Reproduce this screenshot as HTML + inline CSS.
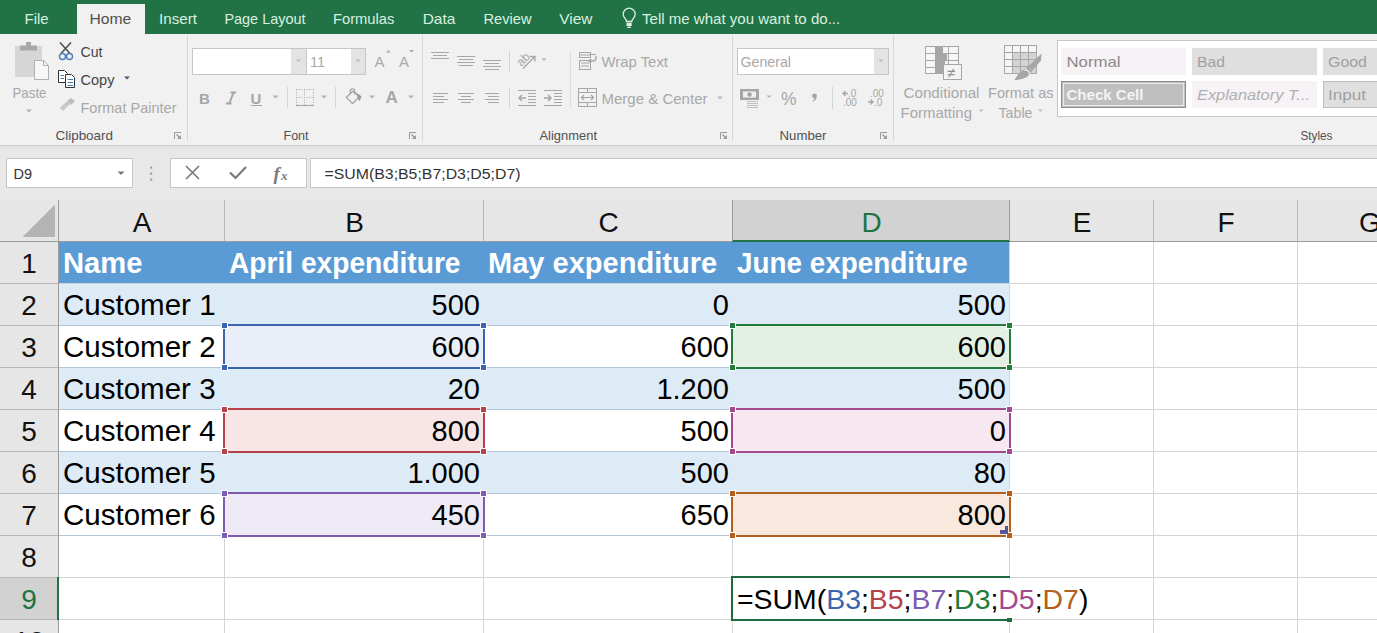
<!DOCTYPE html>
<html><head><meta charset="utf-8">
<style>
*{box-sizing:border-box}
html,body{margin:0;padding:0}
body{width:1377px;height:633px;overflow:hidden;position:relative;background:#fff;font-family:"Liberation Sans",sans-serif}
div,span{position:absolute;white-space:nowrap}
.tab{top:9px;font-size:14.5px;color:#e3f1e8;line-height:18px}
.glabel{top:127px;font-size:13px;color:#555;line-height:16px}
.gsep{top:38px;width:1px;height:103px;background:#dadada}
.rt{font-size:14.5px;color:#444;line-height:18px}
.dis{color:#a8a8a8}
.ch{top:200px;height:41px;font-size:28px;color:#111;text-align:center;line-height:41px}
.rh{left:0;width:58px;height:42px;font-size:28px;color:#111;text-align:center;line-height:42px}
.cell{font-size:27.5px;color:#000;line-height:42px;letter-spacing:0.9px}
.hd{font-weight:bold;color:#fff;letter-spacing:0.2px}
.r{text-align:right}
</style></head><body>
<div style="left:0;top:0;width:1377px;height:34px;background:#217346"></div>
<div style="left:77px;top:4px;width:68px;height:31px;background:#f1f1f1"></div>
<svg style="position:absolute;left:0;top:0" width="1377" height="34" font-family="Liberation Sans"><text x="24.599999999999998" y="24" font-size="15" fill="#d9f0e0" textLength="24.0" lengthAdjust="spacingAndGlyphs">File</text><text x="89.5" y="24" font-size="15" fill="#505050" textLength="41.8" lengthAdjust="spacingAndGlyphs">Home</text><text x="159.0" y="24" font-size="15" fill="#d9f0e0" textLength="37.9" lengthAdjust="spacingAndGlyphs">Insert</text><text x="224.39999999999998" y="24" font-size="15" fill="#d9f0e0" textLength="81.2" lengthAdjust="spacingAndGlyphs">Page Layout</text><text x="333.0" y="24" font-size="15" fill="#d9f0e0" textLength="61.4" lengthAdjust="spacingAndGlyphs">Formulas</text><text x="422.7" y="24" font-size="15" fill="#d9f0e0" textLength="32.7" lengthAdjust="spacingAndGlyphs">Data</text><text x="483.4" y="24" font-size="15" fill="#d9f0e0" textLength="48.1" lengthAdjust="spacingAndGlyphs">Review</text><text x="559.2" y="24" font-size="15" fill="#d9f0e0" textLength="33.2" lengthAdjust="spacingAndGlyphs">View</text><text x="642.0" y="24" font-size="15" fill="#d9f0e0" textLength="198.20000000000002" lengthAdjust="spacingAndGlyphs">Tell me what you want to do...</text><path d="M626.6 21.5c0-2.2-3.4-3.8-3.4-7.3a6 6 0 0 1 12 0c0 3.5-3.4 5.1-3.4 7.3z" fill="none" stroke="#d9f0e0" stroke-width="1.3"/><rect x="626.5" y="22.8" width="5.2" height="3.2" fill="#d9f0e0"/><rect x="627.3" y="26.6" width="3.6" height="1.4" fill="#d9f0e0"/></svg>
<div style="left:0;top:34px;width:1377px;height:111px;background:#f1f1f1"></div>
<div style="left:0;top:145px;width:1377px;height:55px;background:#e8e8e8"></div>
<div style="left:0;top:145px;width:1377px;height:1px;background:#d2d2d2"></div>
<div style="left:0;top:146px;width:1377px;height:3px;background:#e2e2e2"></div>
<svg style="position:absolute;left:0;top:0" width="1377" height="200" font-family="Liberation Sans"><line x1="187.5" y1="35" x2="187.5" y2="141" stroke="#d6d6d6" stroke-width="1"/><line x1="422.5" y1="35" x2="422.5" y2="141" stroke="#d6d6d6" stroke-width="1"/><line x1="732.5" y1="35" x2="732.5" y2="141" stroke="#d6d6d6" stroke-width="1"/><line x1="893.5" y1="35" x2="893.5" y2="141" stroke="#d6d6d6" stroke-width="1"/><text x="55.5" y="140" font-size="13" fill="#505050" textLength="57.5" lengthAdjust="spacingAndGlyphs">Clipboard</text><text x="283.5" y="140" font-size="13" fill="#505050" textLength="25" lengthAdjust="spacingAndGlyphs">Font</text><text x="539.5" y="140" font-size="13" fill="#505050" textLength="57.5" lengthAdjust="spacingAndGlyphs">Alignment</text><text x="779.5" y="140" font-size="13" fill="#505050" textLength="47" lengthAdjust="spacingAndGlyphs">Number</text><text x="1300.5" y="140" font-size="13" fill="#505050" textLength="32" lengthAdjust="spacingAndGlyphs">Styles</text><path d="M174.5 139v-6.5h6.5" fill="none" stroke="#9a9a9a" stroke-width="1"/><path d="M176.5 134.5l4 4" fill="none" stroke="#9a9a9a" stroke-width="1.2"/><path d="M181 135v4h-4z" fill="#9a9a9a" stroke="none" stroke-width="1"/><path d="M409.5 139v-6.5h6.5" fill="none" stroke="#9a9a9a" stroke-width="1"/><path d="M411.5 134.5l4 4" fill="none" stroke="#9a9a9a" stroke-width="1.2"/><path d="M416 135v4h-4z" fill="#9a9a9a" stroke="none" stroke-width="1"/><path d="M720.5 139v-6.5h6.5" fill="none" stroke="#9a9a9a" stroke-width="1"/><path d="M722.5 134.5l4 4" fill="none" stroke="#9a9a9a" stroke-width="1.2"/><path d="M727 135v4h-4z" fill="#9a9a9a" stroke="none" stroke-width="1"/><path d="M880.5 139v-6.5h6.5" fill="none" stroke="#9a9a9a" stroke-width="1"/><path d="M882.5 134.5l4 4" fill="none" stroke="#9a9a9a" stroke-width="1.2"/><path d="M887 135v4h-4z" fill="#9a9a9a" stroke="none" stroke-width="1"/><rect x="15" y="46" width="27" height="31" fill="#d6d6d6" stroke="none" stroke-width="1"/><rect x="20" y="45.5" width="17" height="5" fill="#a8a8a8" stroke="none" stroke-width="1"/><rect x="26" y="42" width="5" height="4" fill="#a8a8a8" stroke="none" stroke-width="1"/><path d="M34.5 60.5h9l5 5v14h-14z" fill="#f7f7f7" stroke="#b0b0b0" stroke-width="1"/><path d="M43.5 60.5v5h5" fill="none" stroke="#b0b0b0" stroke-width="1"/><text x="12.5" y="98" font-size="14.5" fill="#a8a8a8" textLength="34" lengthAdjust="spacingAndGlyphs">Paste</text><path d="M26.0 109.5h6l-3.0 3.0z" fill="#b0b0b0" stroke="none" stroke-width="1"/><path d="M60 42.5l10 11M71 42.5l-10 11" fill="none" stroke="#505050" stroke-width="1.6"/><circle cx="62.5" cy="56.5" r="3" fill="none" stroke="#4a7ebb" stroke-width="1.4"/><circle cx="69.5" cy="56.5" r="3" fill="none" stroke="#4a7ebb" stroke-width="1.4"/><text x="80.5" y="57" font-size="14.5" fill="#444" textLength="22" lengthAdjust="spacingAndGlyphs">Cut</text><path d="M58.5 70.5h6l3 3v9h-9z" fill="#fff" stroke="#333" stroke-width="1"/><path d="M65.5 74.5h6l3 3v10h-9z" fill="#fff" stroke="#333" stroke-width="1"/><line x1="60.5" y1="75.5" x2="64" y2="75.5" stroke="#4a7ebb" stroke-width="1"/><line x1="60.5" y1="78.5" x2="64" y2="78.5" stroke="#4a7ebb" stroke-width="1"/><line x1="67.5" y1="79.5" x2="73" y2="79.5" stroke="#4a7ebb" stroke-width="1"/><line x1="67.5" y1="82.5" x2="73" y2="82.5" stroke="#4a7ebb" stroke-width="1"/><line x1="67.5" y1="85.5" x2="73" y2="85.5" stroke="#4a7ebb" stroke-width="1"/><text x="80.5" y="85" font-size="14.5" fill="#444" textLength="34" lengthAdjust="spacingAndGlyphs">Copy</text><path d="M124.0 76.5h6l-3.0 3.0z" fill="#555" stroke="none" stroke-width="1"/><path d="M60 108l7-7 3 3-7 7z" fill="#c8c8c8" stroke="none" stroke-width="1"/><path d="M67 101l4-3 4 3-4 4z" fill="#bdbdbd" stroke="none" stroke-width="1"/><text x="80.5" y="112.5" font-size="14.5" fill="#a8a8a8" textLength="96" lengthAdjust="spacingAndGlyphs">Format Painter</text><rect x="192.5" y="48.5" width="114" height="26" fill="#fff" stroke="#c6c6c6" stroke-width="1"/><rect x="291" y="49" width="15" height="25" fill="#e3e3e3" stroke="none" stroke-width="1"/><rect x="306.5" y="48.5" width="59" height="26" fill="#fff" stroke="#c6c6c6" stroke-width="1"/><rect x="351" y="49" width="14" height="25" fill="#e3e3e3" stroke="none" stroke-width="1"/><path d="M296.0 59.5h5l-2.5 2.5z" fill="#b8b8b8" stroke="none" stroke-width="1"/><path d="M355.5 59.5h5l-2.5 2.5z" fill="#b8b8b8" stroke="none" stroke-width="1"/><text x="310" y="67" font-size="14.5" fill="#a8a8a8">11</text><text x="374.5" y="67" font-size="15" fill="#a8a8a8">A</text><path d="M386 52.5l2.5-2.5 2.5 2.5" fill="#a8a8a8" stroke="none" stroke-width="1"/><text x="399" y="67" font-size="15" fill="#a8a8a8">A</text><path d="M409 50h5l-2.5 2.5z" fill="#a8a8a8" stroke="none" stroke-width="1"/><text x="199" y="103.5" font-size="15" fill="#a6a6a6" font-weight="bold">B</text><path d="M230.5 92.5h5.5M226 103.5h5.5M233.5 92.5l-4.2 11" fill="none" stroke="#a6a6a6" stroke-width="2"/><text x="250.5" y="103.5" font-size="15" fill="#a6a6a6" font-weight="bold">U</text><line x1="251" y1="105.5" x2="262" y2="105.5" stroke="#a6a6a6" stroke-width="1"/><path d="M272.5 95.5h6l-3.0 3.0z" fill="#b4b4b4" stroke="none" stroke-width="1"/><line x1="287.5" y1="87" x2="287.5" y2="108.5" stroke="#d4d4d4" stroke-width="1"/><g stroke="#a6a6a6" stroke-width="1" stroke-dasharray="1 1.5" fill="none"><path d="M296.5 89.5h17M296.5 97.5h17M296.5 89.5v16M304.5 89.5v16M313.5 89.5v16"/></g><line x1="296" y1="105.5" x2="314" y2="105.5" stroke="#a6a6a6" stroke-width="1.2"/><path d="M321.0 95.5h6l-3.0 3.0z" fill="#b4b4b4" stroke="none" stroke-width="1"/><line x1="335.5" y1="87" x2="335.5" y2="108.5" stroke="#d4d4d4" stroke-width="1"/><path d="M346.3 97.3l6.6-6.1 6.8 5.3-7.2 7z" fill="none" stroke="#a0a0a0" stroke-width="1.2" stroke-linejoin="round"/><path d="M350.3 93.5v-2.5a2.2 2.2 0 0 1 4.4 0v3.8" fill="none" stroke="#a6a6a6" stroke-width="1.3"/><path d="M355.5 92.3l6 4-2 5.3z" fill="#9a9a9a" stroke="none" stroke-width="1"/><path d="M369.0 95.5h6l-3.0 3.0z" fill="#b4b4b4" stroke="none" stroke-width="1"/><text x="385.5" y="102.5" font-size="17" fill="#a6a6a6" font-weight="bold">A</text><path d="M408.0 95.5h6l-3.0 3.0z" fill="#b4b4b4" stroke="none" stroke-width="1"/><line x1="431" y1="52.5" x2="449" y2="52.5" stroke="#a6a6a6" stroke-width="1"/><line x1="433" y1="55.5" x2="447" y2="55.5" stroke="#a6a6a6" stroke-width="1"/><line x1="431" y1="58.5" x2="449" y2="58.5" stroke="#a6a6a6" stroke-width="1"/><line x1="457" y1="56.5" x2="475" y2="56.5" stroke="#a6a6a6" stroke-width="1"/><line x1="459" y1="59.5" x2="473" y2="59.5" stroke="#a6a6a6" stroke-width="1"/><line x1="457" y1="62.5" x2="475" y2="62.5" stroke="#a6a6a6" stroke-width="1"/><line x1="459" y1="65.5" x2="473" y2="65.5" stroke="#a6a6a6" stroke-width="1"/><line x1="483" y1="60.5" x2="501" y2="60.5" stroke="#a6a6a6" stroke-width="1"/><line x1="485" y1="63.5" x2="499" y2="63.5" stroke="#a6a6a6" stroke-width="1"/><line x1="483" y1="66.5" x2="501" y2="66.5" stroke="#a6a6a6" stroke-width="1"/><line x1="485" y1="69.5" x2="499" y2="69.5" stroke="#a6a6a6" stroke-width="1"/><line x1="509.5" y1="51" x2="509.5" y2="72" stroke="#d4d4d4" stroke-width="1"/><text x="517" y="63" font-size="12" fill="#a6a6a6" transform="rotate(-45 524 60)">ab</text><path d="M523 68.5l12-12m-5 0h5v5" fill="none" stroke="#a6a6a6" stroke-width="1.3"/><path d="M541.5 58.5h5l-2.5 2.5z" fill="#b4b4b4" stroke="none" stroke-width="1"/><line x1="570.5" y1="51" x2="570.5" y2="108" stroke="#dcdcdc" stroke-width="1"/><line x1="433" y1="93.5" x2="448" y2="93.5" stroke="#a6a6a6" stroke-width="1"/><line x1="433" y1="96.5" x2="444" y2="96.5" stroke="#a6a6a6" stroke-width="1"/><line x1="433" y1="99.5" x2="448" y2="99.5" stroke="#a6a6a6" stroke-width="1"/><line x1="433" y1="102.5" x2="444" y2="102.5" stroke="#a6a6a6" stroke-width="1"/><line x1="458" y1="93.5" x2="474" y2="93.5" stroke="#a6a6a6" stroke-width="1"/><line x1="461" y1="96.5" x2="471" y2="96.5" stroke="#a6a6a6" stroke-width="1"/><line x1="458" y1="99.5" x2="474" y2="99.5" stroke="#a6a6a6" stroke-width="1"/><line x1="461" y1="102.5" x2="471" y2="102.5" stroke="#a6a6a6" stroke-width="1"/><line x1="485" y1="93.5" x2="499" y2="93.5" stroke="#a6a6a6" stroke-width="1"/><line x1="488" y1="96.5" x2="499" y2="96.5" stroke="#a6a6a6" stroke-width="1"/><line x1="485" y1="99.5" x2="499" y2="99.5" stroke="#a6a6a6" stroke-width="1"/><line x1="488" y1="102.5" x2="499" y2="102.5" stroke="#a6a6a6" stroke-width="1"/><line x1="509.5" y1="87.5" x2="509.5" y2="108.5" stroke="#d4d4d4" stroke-width="1"/><line x1="518" y1="90.5" x2="536" y2="90.5" stroke="#a6a6a6" stroke-width="1"/><line x1="528" y1="93.5" x2="536" y2="93.5" stroke="#a6a6a6" stroke-width="1"/><line x1="528" y1="96.5" x2="536" y2="96.5" stroke="#a6a6a6" stroke-width="1"/><line x1="528" y1="99.5" x2="536" y2="99.5" stroke="#a6a6a6" stroke-width="1"/><line x1="528" y1="102.5" x2="536" y2="102.5" stroke="#a6a6a6" stroke-width="1"/><line x1="518" y1="105.5" x2="536" y2="105.5" stroke="#a6a6a6" stroke-width="1"/><path d="M526 98h-7m3-3l-3 3 3 3" fill="none" stroke="#a6a6a6" stroke-width="1.5"/><line x1="544" y1="90.5" x2="562" y2="90.5" stroke="#a6a6a6" stroke-width="1"/><line x1="554" y1="93.5" x2="562" y2="93.5" stroke="#a6a6a6" stroke-width="1"/><line x1="554" y1="96.5" x2="562" y2="96.5" stroke="#a6a6a6" stroke-width="1"/><line x1="554" y1="99.5" x2="562" y2="99.5" stroke="#a6a6a6" stroke-width="1"/><line x1="554" y1="102.5" x2="562" y2="102.5" stroke="#a6a6a6" stroke-width="1"/><line x1="544" y1="105.5" x2="562" y2="105.5" stroke="#a6a6a6" stroke-width="1"/><path d="M544 98h7m-3-3l3 3-3 3" fill="none" stroke="#a6a6a6" stroke-width="1.5"/><rect x="579.5" y="52.5" width="11" height="5" fill="none" stroke="#a6a6a6" stroke-width="1"/><line x1="579.5" y1="55" x2="590.5" y2="55" stroke="#a6a6a6" stroke-width="1"/><line x1="590.5" y1="54.5" x2="596" y2="54.5" stroke="#a6a6a6" stroke-width="1"/><rect x="579.5" y="60.5" width="11" height="9" fill="none" stroke="#a6a6a6" stroke-width="1"/><line x1="581" y1="63" x2="589" y2="63" stroke="#a6a6a6" stroke-width="1"/><line x1="581" y1="66" x2="589" y2="66" stroke="#a6a6a6" stroke-width="1"/><path d="M596 56v2a3 3 0 0 1-3 3h-4m2-2l-2 2 2 2" fill="none" stroke="#a6a6a6" stroke-width="1.4"/><text x="601.5" y="67" font-size="14.5" fill="#a8a8a8" textLength="66.5" lengthAdjust="spacingAndGlyphs">Wrap Text</text><rect x="578.5" y="88.5" width="18" height="18" fill="none" stroke="#a6a6a6" stroke-width="1"/><line x1="578.5" y1="92.5" x2="596.5" y2="92.5" stroke="#a6a6a6" stroke-width="1"/><line x1="578.5" y1="102.5" x2="596.5" y2="102.5" stroke="#a6a6a6" stroke-width="1"/><line x1="587.5" y1="88.5" x2="587.5" y2="92.5" stroke="#a6a6a6" stroke-width="1"/><line x1="587.5" y1="102.5" x2="587.5" y2="106.5" stroke="#a6a6a6" stroke-width="1"/><path d="M581 97.5h13m-10-2.5l-2.5 2.5 2.5 2.5m7-5l2.5 2.5-2.5 2.5" fill="none" stroke="#a6a6a6" stroke-width="1.2"/><text x="601.5" y="104" font-size="14.5" fill="#a8a8a8" textLength="106" lengthAdjust="spacingAndGlyphs">Merge &amp; Center</text><path d="M717.0 96.5h6l-3.0 3.0z" fill="#b8b8b8" stroke="none" stroke-width="1"/><rect x="737.5" y="48.5" width="151" height="26" fill="#fff" stroke="#c6c6c6" stroke-width="1"/><rect x="874" y="49" width="14" height="25" fill="#e3e3e3" stroke="none" stroke-width="1"/><path d="M878.5 59.5h5l-2.5 2.5z" fill="#b8b8b8" stroke="none" stroke-width="1"/><text x="740.5" y="67" font-size="14.5" fill="#a8a8a8" textLength="50.5" lengthAdjust="spacingAndGlyphs">General</text><rect x="740" y="89" width="19" height="11" fill="#a6a6a6" stroke="none" stroke-width="1"/><rect x="743" y="91.5" width="13" height="6" fill="#f1f1f1" stroke="none" stroke-width="1"/><circle cx="749.5" cy="94.5" r="2.3" fill="#a6a6a6"/><line x1="747" y1="101.5" x2="758" y2="101.5" stroke="#c0c0c0" stroke-width="1"/><line x1="747" y1="103.5" x2="758" y2="103.5" stroke="#c0c0c0" stroke-width="1"/><line x1="747" y1="105.5" x2="758" y2="105.5" stroke="#c0c0c0" stroke-width="1"/><line x1="747" y1="107.5" x2="758" y2="107.5" stroke="#c0c0c0" stroke-width="1"/><path d="M766.5 95.5h5l-2.5 2.5z" fill="#b4b4b4" stroke="none" stroke-width="1"/><text x="781" y="105" font-size="19" fill="#a6a6a6" textLength="15.5" lengthAdjust="spacingAndGlyphs">%</text><circle cx="814.5" cy="96" r="2.4" fill="#a6a6a6"/><path d="M816.6 96.5c0 2.4-1.2 4.2-3.6 5.2l-.5-.9c1.5-.8 2.2-2 2.2-3.3z" fill="#a6a6a6" stroke="none" stroke-width="1"/><line x1="832.5" y1="87" x2="832.5" y2="109" stroke="#d4d4d4" stroke-width="1"/><text x="848" y="97" font-size="10" fill="#a6a6a6">.0</text><path d="M848 93.5h-5m2.5-2.5l-2.5 2.5 2.5 2.5" fill="none" stroke="#a6a6a6" stroke-width="1.3"/><text x="843" y="105.5" font-size="10" fill="#a6a6a6">.00</text><text x="870" y="97" font-size="10" fill="#a6a6a6">.00</text><text x="874" y="105.5" font-size="10" fill="#a6a6a6">.0</text><path d="M868 102h5m-2.5-2.5l2.5 2.5-2.5 2.5" fill="none" stroke="#a6a6a6" stroke-width="1.3"/><rect x="925.5" y="46.5" width="33" height="27" fill="#f6f6f6" stroke="#a6a6a6" stroke-width="1"/><line x1="935.5" y1="46.5" x2="935.5" y2="73.5" stroke="#a6a6a6" stroke-width="1"/><line x1="942.5" y1="46.5" x2="942.5" y2="73.5" stroke="#a6a6a6" stroke-width="1"/><line x1="948.5" y1="46.5" x2="948.5" y2="73.5" stroke="#a6a6a6" stroke-width="1"/><line x1="925.5" y1="53.5" x2="958.5" y2="53.5" stroke="#a6a6a6" stroke-width="1"/><line x1="925.5" y1="60.5" x2="958.5" y2="60.5" stroke="#a6a6a6" stroke-width="1"/><line x1="925.5" y1="67.5" x2="958.5" y2="67.5" stroke="#a6a6a6" stroke-width="1"/><rect x="936" y="47" width="7" height="6" fill="#a6a6a6" stroke="none" stroke-width="1"/><rect x="936" y="54" width="11" height="6" fill="#a6a6a6" stroke="none" stroke-width="1"/><rect x="936" y="61" width="9" height="6" fill="#a6a6a6" stroke="none" stroke-width="1"/><rect x="936" y="68" width="7" height="5" fill="#a6a6a6" stroke="none" stroke-width="1"/><rect x="943.5" y="64.5" width="18" height="15" fill="#f4f4f4" stroke="#a6a6a6" stroke-width="1"/><text x="947" y="77.5" font-size="15" fill="#8c8c8c">&#8800;</text><text x="903.5" y="98" font-size="14.5" fill="#a8a8a8" textLength="76" lengthAdjust="spacingAndGlyphs">Conditional</text><text x="900.5" y="117.5" font-size="14.5" fill="#a8a8a8" textLength="71.5" lengthAdjust="spacingAndGlyphs">Formatting</text><path d="M978.5 109.5h5l-2.5 2.5z" fill="#c0c0c0" stroke="none" stroke-width="1"/><rect x="1004.5" y="45.5" width="32" height="28" fill="#f6f6f6" stroke="#a6a6a6" stroke-width="1"/><rect x="1013" y="53" width="24" height="21" fill="#d4d4d4" stroke="none" stroke-width="1"/><line x1="1012.5" y1="45.5" x2="1012.5" y2="73.5" stroke="#a6a6a6" stroke-width="1"/><line x1="1020.5" y1="45.5" x2="1020.5" y2="73.5" stroke="#a6a6a6" stroke-width="1"/><line x1="1028.5" y1="45.5" x2="1028.5" y2="73.5" stroke="#a6a6a6" stroke-width="1"/><line x1="1004.5" y1="52.5" x2="1036.5" y2="52.5" stroke="#a6a6a6" stroke-width="1"/><line x1="1004.5" y1="59.5" x2="1036.5" y2="59.5" stroke="#a6a6a6" stroke-width="1"/><line x1="1004.5" y1="66.5" x2="1036.5" y2="66.5" stroke="#a6a6a6" stroke-width="1"/><rect x="1004.5" y="45.5" width="32" height="28" fill="none" stroke="#a6a6a6" stroke-width="1"/><path d="M1041.5 53.5l-0.5 7-8.5 10-4.5-4z" fill="#a6a6a6" stroke="none" stroke-width="1"/><path d="M1027.5 66.5l5 4.5-1.5 1.8-5-4.5z" fill="#a6a6a6" stroke="none" stroke-width="1"/><path d="M1025 69l5 4.3c-1.8 3.5-5 6.2-15.5 6.7 2.5-4.5 5.5-9 10.5-11z" fill="#a6a6a6" stroke="none" stroke-width="1"/><path d="M1024.5 70.5a3.2 3.2 0 0 1 4.5 4" fill="none" stroke="#f1f1f1" stroke-width="1.2"/><text x="988" y="98" font-size="14.5" fill="#a8a8a8" textLength="65.5" lengthAdjust="spacingAndGlyphs">Format as</text><text x="998.5" y="117.5" font-size="14.5" fill="#a8a8a8" textLength="34" lengthAdjust="spacingAndGlyphs">Table</text><path d="M1038.0 109.5h5l-2.5 2.5z" fill="#c0c0c0" stroke="none" stroke-width="1"/><rect x="1057.5" y="40.5" width="330" height="76" fill="#fff" stroke="#c6c6c6" stroke-width="1"/><rect x="1061" y="48" width="125" height="27" fill="#f6f2f5" stroke="none" stroke-width="1"/><rect x="1192" y="48" width="125" height="27" fill="#e0dfe0" stroke="none" stroke-width="1"/><rect x="1323" y="48" width="80" height="27" fill="#e0dfe0" stroke="none" stroke-width="1"/><rect x="1061.5" y="81.5" width="124" height="26" fill="#bfbfbf" stroke="#8c8c8c" stroke-width="1"/><rect x="1063.5" y="83.5" width="120" height="22" fill="none" stroke="#e8e8e8" stroke-width="1"/><rect x="1192" y="81" width="125" height="27" fill="#f6f2f5" stroke="none" stroke-width="1"/><rect x="1323.5" y="81.5" width="80" height="26" fill="#e0dfe0" stroke="#bdbdbd" stroke-width="1"/><text x="1066.5" y="67" font-size="14.5" fill="#8a8a8a" textLength="54" lengthAdjust="spacingAndGlyphs">Normal</text><text x="1197" y="67" font-size="14.5" fill="#a0a0a0" textLength="28" lengthAdjust="spacingAndGlyphs">Bad</text><text x="1328" y="67" font-size="14.5" fill="#a0a0a0" textLength="39" lengthAdjust="spacingAndGlyphs">Good</text><text x="1066.5" y="100" font-size="14.5" fill="#f4f4f4" textLength="77" lengthAdjust="spacingAndGlyphs" font-weight="bold">Check Cell</text><text x="1197" y="100" font-size="14.5" fill="#b0b0b0" textLength="113" lengthAdjust="spacingAndGlyphs" font-style="italic">Explanatory T...</text><text x="1328" y="100" font-size="14.5" fill="#a0a0a0" textLength="38" lengthAdjust="spacingAndGlyphs">Input</text></svg>
<svg style="position:absolute;left:0;top:0" width="1377" height="200" font-family="Liberation Sans"><rect x="6.5" y="158.5" width="126" height="29" fill="#fff" stroke="#c6c6c6"/><text x="13.5" y="179" font-size="14.5" fill="#333">D9</text><path d="M117.5 171.5h7l-3.5 3.5z" fill="#777"/><rect x="150" y="166.5" width="2.2" height="2.2" fill="#a0a0a0"/><rect x="150" y="172.5" width="2.2" height="2.2" fill="#a0a0a0"/><rect x="150" y="178.5" width="2.2" height="2.2" fill="#a0a0a0"/><rect x="170.5" y="158.5" width="136" height="29" fill="#fff" stroke="#c6c6c6"/><path d="M186 166l13 13M199 166l-13 13" stroke="#777" stroke-width="1.6"/><path d="M230 172.5l5.5 5.5 10.5-11" stroke="#7a7a7a" stroke-width="2.2" fill="none"/><text x="273.5" y="180" font-size="19" fill="#7a7a7a" font-family="Liberation Serif" font-style="italic" font-weight="bold">f</text><text x="281" y="180" font-size="13" fill="#7a7a7a" font-family="Liberation Serif" font-style="italic" font-weight="bold">x</text><rect x="310.5" y="158.5" width="1100" height="29" fill="#fff" stroke="#c6c6c6"/><text x="324.5" y="179" font-size="15.5" fill="#333" textLength="196" lengthAdjust="spacingAndGlyphs">=SUM(B3;B5;B7;D3;D5;D7)</text></svg>
<svg style="position:absolute;left:0;top:0" width="1377" height="633" font-family="Liberation Sans" shape-rendering="crispEdges"><rect x="0" y="200" width="1377" height="41" fill="#e6e6e6"/><rect x="733" y="200" width="276" height="41" fill="#d2d2d2"/><rect x="0" y="241" width="1377" height="1" fill="#9b9b9b"/><rect x="732" y="240" width="278" height="2" fill="#217346"/><rect x="58" y="200" width="1" height="41" fill="#b8b8b8"/><rect x="224" y="200" width="1" height="41" fill="#b8b8b8"/><rect x="483" y="200" width="1" height="41" fill="#b8b8b8"/><rect x="732" y="200" width="1" height="41" fill="#9a9a9a"/><rect x="1009" y="200" width="1" height="41" fill="#9a9a9a"/><rect x="1153" y="200" width="1" height="41" fill="#b8b8b8"/><rect x="1297" y="200" width="1" height="41" fill="#b8b8b8"/><text x="142.0" y="232" font-size="28" fill="#111" text-anchor="middle">A</text><text x="354.5" y="232" font-size="28" fill="#111" text-anchor="middle">B</text><text x="608.5" y="232" font-size="28" fill="#111" text-anchor="middle">C</text><text x="871.5" y="232" font-size="28" fill="#217346" text-anchor="middle">D</text><text x="1082.0" y="232" font-size="28" fill="#111" text-anchor="middle">E</text><text x="1226.0" y="232" font-size="28" fill="#111" text-anchor="middle">F</text><text x="1370.0" y="232" font-size="28" fill="#111" text-anchor="middle">G</text><polygon points="55,204 55,237 22,237" fill="#b4b4b4"/><rect x="0" y="242" width="58" height="391" fill="#e6e6e6"/><rect x="0" y="578" width="58" height="41" fill="#d2d2d2"/><rect x="0" y="283" width="58" height="1" fill="#b8b8b8"/><rect x="0" y="325" width="58" height="1" fill="#b8b8b8"/><rect x="0" y="367" width="58" height="1" fill="#b8b8b8"/><rect x="0" y="409" width="58" height="1" fill="#b8b8b8"/><rect x="0" y="451" width="58" height="1" fill="#b8b8b8"/><rect x="0" y="493" width="58" height="1" fill="#b8b8b8"/><rect x="0" y="535" width="58" height="1" fill="#b8b8b8"/><rect x="0" y="577" width="58" height="1" fill="#b8b8b8"/><rect x="0" y="619" width="58" height="1" fill="#b8b8b8"/><rect x="58" y="200" width="1" height="433" fill="#9b9b9b"/><rect x="57" y="577" width="2" height="43" fill="#217346"/><text x="29" y="273" font-size="28" fill="#111" text-anchor="middle">1</text><text x="29" y="315" font-size="28" fill="#111" text-anchor="middle">2</text><text x="29" y="357" font-size="28" fill="#111" text-anchor="middle">3</text><text x="29" y="399" font-size="28" fill="#111" text-anchor="middle">4</text><text x="29" y="441" font-size="28" fill="#111" text-anchor="middle">5</text><text x="29" y="483" font-size="28" fill="#111" text-anchor="middle">6</text><text x="29" y="525" font-size="28" fill="#111" text-anchor="middle">7</text><text x="29" y="567" font-size="28" fill="#111" text-anchor="middle">8</text><text x="29" y="609" font-size="28" fill="#217346" text-anchor="middle">9</text><text x="29" y="651" font-size="28" fill="#111" text-anchor="middle">10</text><rect x="59" y="242" width="1318" height="391" fill="#ffffff"/><rect x="59" y="242" width="950" height="41" fill="#5b9bd5"/><rect x="59" y="284" width="950" height="41" fill="#ddebf7"/><rect x="59" y="368" width="950" height="41" fill="#ddebf7"/><rect x="59" y="452" width="950" height="41" fill="#ddebf7"/><rect x="59" y="283" width="1318" height="1" fill="#d4d4d4"/><rect x="59" y="325" width="1318" height="1" fill="#d4d4d4"/><rect x="59" y="325" width="950" height="1" fill="#b3c6db"/><rect x="59" y="367" width="1318" height="1" fill="#d4d4d4"/><rect x="59" y="367" width="950" height="1" fill="#b3c6db"/><rect x="59" y="409" width="1318" height="1" fill="#d4d4d4"/><rect x="59" y="409" width="950" height="1" fill="#b3c6db"/><rect x="59" y="451" width="1318" height="1" fill="#d4d4d4"/><rect x="59" y="451" width="950" height="1" fill="#b3c6db"/><rect x="59" y="493" width="1318" height="1" fill="#d4d4d4"/><rect x="59" y="493" width="950" height="1" fill="#b3c6db"/><rect x="59" y="535" width="1318" height="1" fill="#d4d4d4"/><rect x="59" y="535" width="950" height="1" fill="#b3c6db"/><rect x="59" y="577" width="1318" height="1" fill="#d4d4d4"/><rect x="59" y="619" width="1318" height="1" fill="#d4d4d4"/><rect x="224" y="536" width="1" height="97" fill="#d4d4d4"/><rect x="483" y="536" width="1" height="97" fill="#d4d4d4"/><rect x="732" y="536" width="1" height="97" fill="#d4d4d4"/><rect x="1009" y="242" width="1" height="391" fill="#d4d4d4"/><rect x="1153" y="242" width="1" height="391" fill="#d4d4d4"/><rect x="1297" y="242" width="1" height="391" fill="#d4d4d4"/><rect x="59" y="242" width="950" height="41" fill="#5b9bd5"/><rect x="225" y="326" width="258" height="41" fill="#e9eef9"/><rect x="223" y="324" width="262" height="2" fill="#3a64b0"/><rect x="223" y="367" width="262" height="2" fill="#3a64b0"/><rect x="223" y="324" width="2" height="45" fill="#3a64b0"/><rect x="483" y="324" width="2" height="45" fill="#3a64b0"/><rect x="221" y="322" width="7" height="7" fill="#ffffff"/><rect x="222" y="323" width="5" height="5" fill="#3a64b0"/><rect x="221" y="364" width="7" height="7" fill="#ffffff"/><rect x="222" y="365" width="5" height="5" fill="#3a64b0"/><rect x="480" y="322" width="7" height="7" fill="#ffffff"/><rect x="481" y="323" width="5" height="5" fill="#3a64b0"/><rect x="480" y="364" width="7" height="7" fill="#ffffff"/><rect x="481" y="365" width="5" height="5" fill="#3a64b0"/><rect x="225" y="410" width="258" height="41" fill="#f8e6e7"/><rect x="223" y="408" width="262" height="2" fill="#b5414a"/><rect x="223" y="451" width="262" height="2" fill="#b5414a"/><rect x="223" y="408" width="2" height="45" fill="#b5414a"/><rect x="483" y="408" width="2" height="45" fill="#b5414a"/><rect x="221" y="406" width="7" height="7" fill="#ffffff"/><rect x="222" y="407" width="5" height="5" fill="#b5414a"/><rect x="221" y="448" width="7" height="7" fill="#ffffff"/><rect x="222" y="449" width="5" height="5" fill="#b5414a"/><rect x="480" y="406" width="7" height="7" fill="#ffffff"/><rect x="481" y="407" width="5" height="5" fill="#b5414a"/><rect x="480" y="448" width="7" height="7" fill="#ffffff"/><rect x="481" y="449" width="5" height="5" fill="#b5414a"/><rect x="225" y="494" width="258" height="41" fill="#efebf6"/><rect x="223" y="492" width="262" height="2" fill="#7c5cae"/><rect x="223" y="535" width="262" height="2" fill="#7c5cae"/><rect x="223" y="492" width="2" height="45" fill="#7c5cae"/><rect x="483" y="492" width="2" height="45" fill="#7c5cae"/><rect x="221" y="490" width="7" height="7" fill="#ffffff"/><rect x="222" y="491" width="5" height="5" fill="#7c5cae"/><rect x="221" y="532" width="7" height="7" fill="#ffffff"/><rect x="222" y="533" width="5" height="5" fill="#7c5cae"/><rect x="480" y="490" width="7" height="7" fill="#ffffff"/><rect x="481" y="491" width="5" height="5" fill="#7c5cae"/><rect x="480" y="532" width="7" height="7" fill="#ffffff"/><rect x="481" y="533" width="5" height="5" fill="#7c5cae"/><rect x="733" y="326" width="276" height="41" fill="#e3f0e3"/><rect x="731" y="324" width="280" height="2" fill="#237a3a"/><rect x="731" y="367" width="280" height="2" fill="#237a3a"/><rect x="731" y="324" width="2" height="45" fill="#237a3a"/><rect x="1009" y="324" width="2" height="45" fill="#237a3a"/><rect x="729" y="322" width="7" height="7" fill="#ffffff"/><rect x="730" y="323" width="5" height="5" fill="#237a3a"/><rect x="729" y="364" width="7" height="7" fill="#ffffff"/><rect x="730" y="365" width="5" height="5" fill="#237a3a"/><rect x="1006" y="322" width="7" height="7" fill="#ffffff"/><rect x="1007" y="323" width="5" height="5" fill="#237a3a"/><rect x="1006" y="364" width="7" height="7" fill="#ffffff"/><rect x="1007" y="365" width="5" height="5" fill="#237a3a"/><rect x="733" y="410" width="276" height="41" fill="#f6e7f1"/><rect x="731" y="408" width="280" height="2" fill="#a34a8c"/><rect x="731" y="451" width="280" height="2" fill="#a34a8c"/><rect x="731" y="408" width="2" height="45" fill="#a34a8c"/><rect x="1009" y="408" width="2" height="45" fill="#a34a8c"/><rect x="729" y="406" width="7" height="7" fill="#ffffff"/><rect x="730" y="407" width="5" height="5" fill="#a34a8c"/><rect x="729" y="448" width="7" height="7" fill="#ffffff"/><rect x="730" y="449" width="5" height="5" fill="#a34a8c"/><rect x="1006" y="406" width="7" height="7" fill="#ffffff"/><rect x="1007" y="407" width="5" height="5" fill="#a34a8c"/><rect x="1006" y="448" width="7" height="7" fill="#ffffff"/><rect x="1007" y="449" width="5" height="5" fill="#a34a8c"/><rect x="733" y="494" width="276" height="41" fill="#f9e8dd"/><rect x="731" y="492" width="280" height="2" fill="#b3601e"/><rect x="731" y="535" width="280" height="2" fill="#b3601e"/><rect x="731" y="492" width="2" height="45" fill="#b3601e"/><rect x="1009" y="492" width="2" height="45" fill="#b3601e"/><rect x="729" y="490" width="7" height="7" fill="#ffffff"/><rect x="730" y="491" width="5" height="5" fill="#b3601e"/><rect x="729" y="532" width="7" height="7" fill="#ffffff"/><rect x="730" y="533" width="5" height="5" fill="#b3601e"/><rect x="1006" y="490" width="7" height="7" fill="#ffffff"/><rect x="1007" y="491" width="5" height="5" fill="#b3601e"/><rect x="1006" y="532" width="7" height="7" fill="#ffffff"/><rect x="1007" y="533" width="5" height="5" fill="#b3601e"/><path d="M1004.5 525.5h3.5v8h-8.5v-3.5h5z" fill="#55559a"/><text x="63" y="273" font-size="29" fill="#fff" textLength="79.52" lengthAdjust="spacingAndGlyphs" font-weight="bold" id="t0_0">Name</text><text x="229" y="273" font-size="29" fill="#fff" textLength="231.53" lengthAdjust="spacingAndGlyphs" font-weight="bold" id="t0_1">April expenditure</text><text x="488" y="273" font-size="29" fill="#fff" textLength="229.15" lengthAdjust="spacingAndGlyphs" font-weight="bold" id="t0_2">May expenditure</text><text x="737" y="273" font-size="29" fill="#fff" textLength="230.74" lengthAdjust="spacingAndGlyphs" font-weight="bold" id="t0_3">June expenditure</text><text x="63" y="315" font-size="29" fill="#000" textLength="152.56" lengthAdjust="spacingAndGlyphs" id="t1_0">Customer 1</text><text x="480" y="315" font-size="29" fill="#000" text-anchor="end" id="t1_1">500</text><text x="729" y="315" font-size="29" fill="#000" text-anchor="end" id="t1_2">0</text><text x="1006" y="315" font-size="29" fill="#000" text-anchor="end" id="t1_3">500</text><text x="63" y="357" font-size="29" fill="#000" textLength="152.56" lengthAdjust="spacingAndGlyphs" id="t2_0">Customer 2</text><text x="480" y="357" font-size="29" fill="#000" text-anchor="end" id="t2_1">600</text><text x="729" y="357" font-size="29" fill="#000" text-anchor="end" id="t2_2">600</text><text x="1006" y="357" font-size="29" fill="#000" text-anchor="end" id="t2_3">600</text><text x="63" y="399" font-size="29" fill="#000" textLength="152.56" lengthAdjust="spacingAndGlyphs" id="t3_0">Customer 3</text><text x="480" y="399" font-size="29" fill="#000" text-anchor="end" id="t3_1">20</text><text x="729" y="399" font-size="29" fill="#000" text-anchor="end" id="t3_2">1.200</text><text x="1006" y="399" font-size="29" fill="#000" text-anchor="end" id="t3_3">500</text><text x="63" y="441" font-size="29" fill="#000" textLength="152.56" lengthAdjust="spacingAndGlyphs" id="t4_0">Customer 4</text><text x="480" y="441" font-size="29" fill="#000" text-anchor="end" id="t4_1">800</text><text x="729" y="441" font-size="29" fill="#000" text-anchor="end" id="t4_2">500</text><text x="1006" y="441" font-size="29" fill="#000" text-anchor="end" id="t4_3">0</text><text x="63" y="483" font-size="29" fill="#000" textLength="152.56" lengthAdjust="spacingAndGlyphs" id="t5_0">Customer 5</text><text x="480" y="483" font-size="29" fill="#000" text-anchor="end" id="t5_1">1.000</text><text x="729" y="483" font-size="29" fill="#000" text-anchor="end" id="t5_2">500</text><text x="1006" y="483" font-size="29" fill="#000" text-anchor="end" id="t5_3">80</text><text x="63" y="525" font-size="29" fill="#000" textLength="152.56" lengthAdjust="spacingAndGlyphs" id="t6_0">Customer 6</text><text x="480" y="525" font-size="29" fill="#000" text-anchor="end" id="t6_1">450</text><text x="729" y="525" font-size="29" fill="#000" text-anchor="end" id="t6_2">650</text><text x="1006" y="525" font-size="29" fill="#000" text-anchor="end" id="t6_3">800</text><rect x="733" y="578" width="397" height="41" fill="#ffffff"/><rect x="731" y="576" width="279" height="2" fill="#1f6b3f"/><rect x="731" y="619" width="276" height="2" fill="#1f6b3f"/><rect x="731" y="576" width="2" height="45" fill="#1f6b3f"/><rect x="1007" y="618" width="5" height="4" fill="#1f6b3f"/><text id="tf" x="737" y="609" font-size="28" textLength="351.34" lengthAdjust="spacingAndGlyphs"><tspan fill="#000">=SUM(</tspan><tspan fill="#3a64b0">B3</tspan><tspan fill="#000">;</tspan><tspan fill="#b5414a">B5</tspan><tspan fill="#000">;</tspan><tspan fill="#7c5cae">B7</tspan><tspan fill="#000">;</tspan><tspan fill="#237a3a">D3</tspan><tspan fill="#000">;</tspan><tspan fill="#a34a8c">D5</tspan><tspan fill="#000">;</tspan><tspan fill="#b3601e">D7</tspan><tspan fill="#000">)</tspan></text></svg>
</body></html>
